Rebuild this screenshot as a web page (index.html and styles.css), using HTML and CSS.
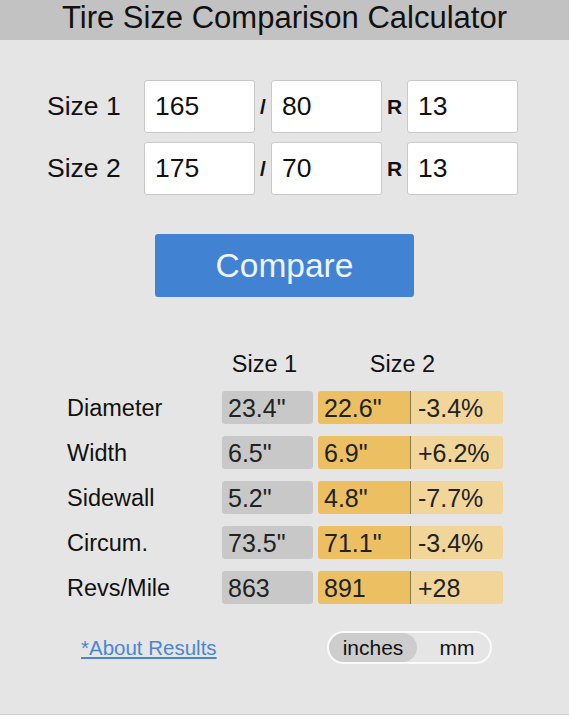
FILE: index.html
```html
<!DOCTYPE html>
<html>
<head>
<meta charset="utf-8">
<link rel="stylesheet" href="styles.css">
</head>
<body>
<div class="app">
  <header class="title">Tire Size Comparison Calculator</header>
  <div class="form">
    <div class="size-row">
      <span class="size-label">Size 1</span>
      <div class="field">165</div>
      <span class="sep">/</span>
      <div class="field">80</div>
      <span class="sep sep-r">R</span>
      <div class="field">13</div>
    </div>
    <div class="size-row">
      <span class="size-label">Size 2</span>
      <div class="field">175</div>
      <span class="sep">/</span>
      <div class="field">70</div>
      <span class="sep sep-r">R</span>
      <div class="field">13</div>
    </div>
  </div>
  <div class="btn-wrap"><button class="compare">Compare</button></div>
  <div class="results">
    <div class="res-head">
      <span class="res-label"></span>
      <span class="head1">Size 1</span>
      <span class="head2">Size 2</span>
    </div>
    <div class="res-row">
      <span class="res-label">Diameter</span>
      <span class="c1">23.4"</span>
      <span class="c2">22.6"</span>
      <span class="c3">-3.4%</span>
    </div>
    <div class="res-row">
      <span class="res-label">Width</span>
      <span class="c1">6.5"</span>
      <span class="c2">6.9"</span>
      <span class="c3">+6.2%</span>
    </div>
    <div class="res-row">
      <span class="res-label">Sidewall</span>
      <span class="c1">5.2"</span>
      <span class="c2">4.8"</span>
      <span class="c3">-7.7%</span>
    </div>
    <div class="res-row">
      <span class="res-label">Circum.</span>
      <span class="c1">73.5"</span>
      <span class="c2">71.1"</span>
      <span class="c3">-3.4%</span>
    </div>
    <div class="res-row">
      <span class="res-label">Revs/Mile</span>
      <span class="c1">863</span>
      <span class="c2">891</span>
      <span class="c3">+28</span>
    </div>
  </div>
  <div class="footer">
    <a class="about" href="#">*About Results</a>
    <div class="toggle">
      <span class="opt active">inches</span>
      <span class="opt">mm</span>
    </div>
  </div>
</div>
</body>
</html>
```
FILE: styles.css
```css
html, body {
  margin: 0;
  padding: 0;
  background: #ffffff;
}
body {
  font-family: "Liberation Sans", Arial, sans-serif;
  color: #111;
}
.app {
  width: 569px;
  height: 715px;
  background: #e5e5e5;
  border-bottom: 1px solid #cfcfcf;
  box-sizing: border-box;
}
.title {
  height: 40px;
  background: #c2c2c2;
  text-align: center;
  font-size: 31px;
  line-height: 35px;
  color: #111;
  overflow: hidden;
}
.form {
  padding: 40px 0 0 47px;
  display: flex;
  flex-direction: column;
  gap: 9px;
}
.size-row {
  display: flex;
  align-items: center;
}
.size-label {
  width: 97px;
  font-size: 26.5px;
}
.field {
  width: 111px;
  height: 53px;
  box-sizing: border-box;
  background: #fff;
  border: 1px solid #c9c9c9;
  border-radius: 3px;
  font-size: 26.5px;
  line-height: 51px;
  padding-left: 10px;
}
.sep {
  width: 16px;
  text-align: center;
  font-size: 21px;
  font-weight: bold;
}
.sep-r {
  width: 25px;
}
.btn-wrap {
  display: flex;
  justify-content: center;
  padding-top: 39px;
}
.compare {
  width: 259px;
  height: 63px;
  border: none;
  border-radius: 3px;
  background: #4282d3;
  color: #eef3fb;
  font-family: "Liberation Sans", Arial, sans-serif;
  font-size: 33.5px;
  line-height: 60px;
  padding: 0;
}
.results {
  padding: 47px 0 0 67px;
  display: flex;
  flex-direction: column;
  gap: 12px;
}
.res-head {
  display: flex;
  height: 40px;
  font-size: 23.5px;
  line-height: 40px;
  margin-bottom: -5px;
}
.res-head .res-label {
  width: 155px;
}
.head1 {
  width: 91px;
  text-align: center;
  margin-left: -3px;
}
.head2 {
  width: 185px;
  text-align: center;
  padding-right: 0;
  box-sizing: border-box;
}
.res-row {
  display: flex;
  height: 33px;
  align-items: stretch;
}
.res-label {
  width: 155px;
  font-size: 23.5px;
  line-height: 34px;
}
.c1, .c2, .c3 {
  width: 91px;
  font-size: 25px;
  line-height: 34px;
  box-sizing: border-box;
  padding-left: 6px;
  color: #222;
}
.c1 {
  background: #c8c8c8;
  border-radius: 3px;
}
.c2 {
  margin-left: 5px;
  width: 93px;
  background: #ecc062;
  border-radius: 3px 0 0 3px;
  border-right: 1px solid #8f7a4a;
}
.c3 {
  width: 92px;
  background: #f2d699;
  border-radius: 0 3px 3px 0;
  padding-left: 7px;
}
.footer {
  display: flex;
  align-items: center;
  justify-content: space-between;
  padding: 27px 77px 0 81px;
}
.about {
  font-size: 20.5px;
  color: #4a86d0;
  text-decoration: underline;
}
.toggle {
  width: 165px;
  height: 33px;
  box-sizing: border-box;
  border: 2px solid #fafafa;
  border-radius: 17px;
  display: flex;
  overflow: hidden;
}
.opt {
  font-size: 21px;
  line-height: 29px;
  text-align: center;
  color: #111;
}
.opt.active {
  width: 88px;
  background: #cdcdcd;
  border-radius: 15px;
}
.opt:last-child {
  flex: 1;
  padding-left: 7px;
}
```
